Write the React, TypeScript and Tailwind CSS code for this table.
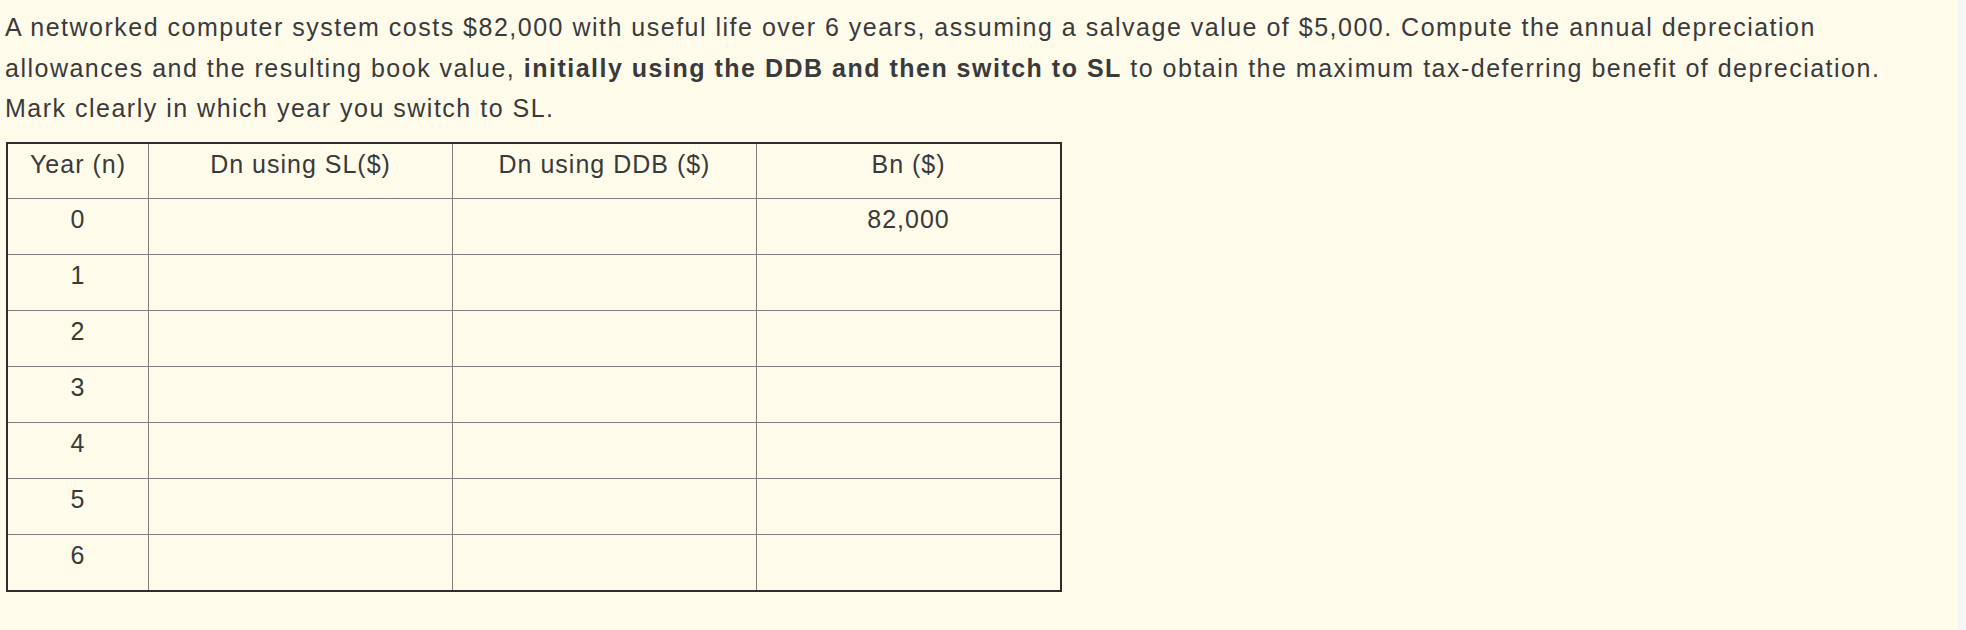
const rows = [
  { n: "0", bn: "82,000" },
  { n: "1", bn: "" },
  { n: "2", bn: "" },
  { n: "3", bn: "" },
  { n: "4", bn: "" },
  { n: "5", bn: "" },
  { n: "6", bn: "" },
]

function Row({ cells, first }: { cells: string[]; first?: boolean }) {
  return (
    <div
      className={`grid grid-cols-[140px_304px_304px_1fr] ${
        first ? "h-[54px]" : "h-[56px] border-t-[1.5px] border-[#7f7f7f]"
      }`}
    >
      {cells.map((c, i) => (
        <div
          key={i}
          className={`text-center leading-[40px] tracking-[1px] ${i > 0 ? "border-l-[1.5px] border-[#7f7f7f]" : ""}`}
        >
          {c}
        </div>
      ))}
    </div>
  )
}

export default function App() {
  return (
    <div className="flex w-[1966px] h-[630px] font-['Liberation_Sans',Arial,sans-serif] text-[25px] text-[#3a3a3a]">
      <div className="w-[1958px] bg-[#fffbeb] pl-[5px] pt-[7px]">
        <p className="whitespace-nowrap leading-[40.6px] tracking-[1.5px]">
          A networked computer system costs $82,000 with useful life over 6 years, assuming a salvage value of $5,000. Compute the annual depreciation
          <br />
          allowances and the resulting book value,{" "}
          <b className="font-bold">initially using the DDB and then switch to SL</b> to obtain the maximum tax-deferring benefit of depreciation.
          <br />
          Mark clearly in which year you switch to SL.
        </p>
        <div className="mt-[13px] ml-px w-[1056px] border-2 border-[#2d2d2d]">
          <Row first cells={["Year (n)", "Dn using SL($)", "Dn using DDB ($)", "Bn ($)"]} />
          {rows.map((r) => (
            <Row key={r.n} cells={[r.n, "", "", r.bn]} />
          ))}
        </div>
      </div>
      <div className="flex-1 bg-[#f5f5f5]" />
    </div>
  )
}
